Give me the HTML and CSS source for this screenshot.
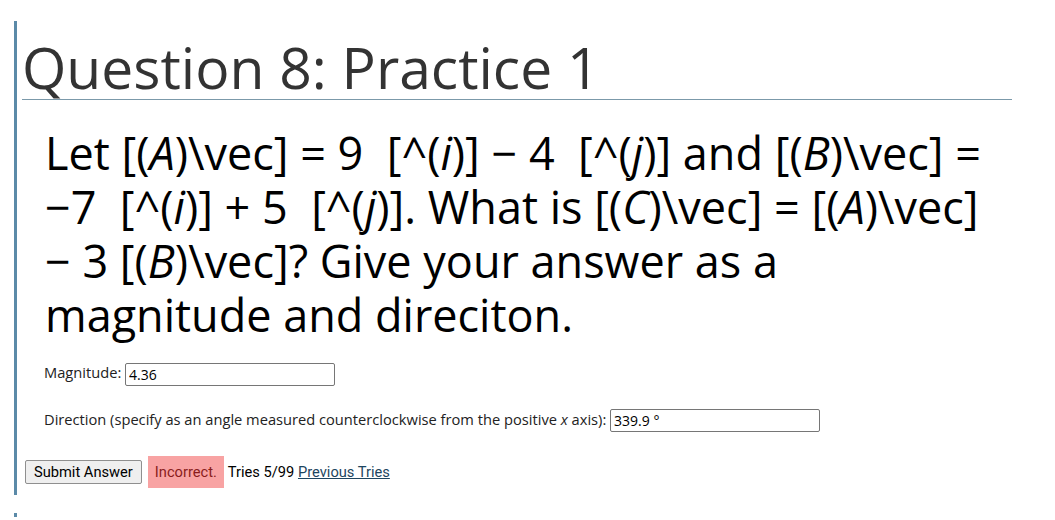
FILE: index.html
```html
<!DOCTYPE html>
<html>
<head>
<meta charset="utf-8">
<link rel="stylesheet" href="styles.css">
</head>
<body>
<div class="question">
  <h2 class="qtitle">Question 8: Practice 1</h2>
  <p class="prompt">Let [(<i>A</i>)\vec] = 9&nbsp; [^(<i>i</i>)] − 4&nbsp; [^(<i>j</i>)] and [(<i>B</i>)\vec] = −7&nbsp; [^(<i>i</i>)] + 5&nbsp; [^(<i>j</i>)]. What is [(<i>C</i>)\vec] = [(<i>A</i>)\vec] −&nbsp;3 [(<i>B</i>)\vec]? Give your answer as a magnitude and direciton.</p>
  <div class="field field-mag">
    <label>Magnitude: <input class="answer" type="text" value="4.36"></label>
  </div>
  <div class="field field-dir">
    <label>Direction (specify as an angle measured counterclockwise from the positive <i>x</i> axis): <input class="answer" type="text" value="339.9 °"></label>
  </div>
  <div class="actions">
    <button class="submit" type="button">Submit Answer</button>
    <span class="status">Incorrect.</span>
    <span class="tries">Tries 5/99 <a href="#" class="prev">Previous Tries</a></span>
  </div>
</div>
<div class="question next"></div>
</body>
</html>
```
FILE: styles.css
```css
html, body {
  margin: 0;
  padding: 0;
  background: #ffffff;
}
body {
  font-family: "Open Sans", "Noto Sans", sans-serif;
  color: #000;
  overflow: hidden;
  height: 520px;
}
.question {
  margin: 21px 43px 0 14px;
  border-left: 3px solid #5b8aa8;
  padding: 14px 0 7px 5px;
}
.qtitle {
  margin: 0;
  font-family: "Open Sans", sans-serif;
  font-weight: 400;
  font-size: 57px;
  line-height: 64px;
  color: #333333;
  border-bottom: 1px solid #7b99aa;
}
.prompt {
  margin: 26px 25px 0 23px;
  font-size: 45px;
  line-height: 54px;
  color: #000;
}
.field {
  margin-left: 22px;
  font-size: 14.67px;
  line-height: 23px;
  color: #222;
}
.field-mag {
  margin-top: 19px;
}
.field-dir {
  margin-top: 22px;
}
.answer {
  box-sizing: border-box;
  width: 210px;
  height: 23px;
  margin: 0;
  padding: 0 3px;
  border: 1px solid #767676;
  border-radius: 2px;
  font-family: "Open Sans", sans-serif;
  font-size: 14px;
  color: #000;
  vertical-align: middle;
}
.actions {
  margin-top: 24px;
  margin-left: 3px;
  display: flex;
  align-items: center;
  font-family: Roboto, sans-serif;
  font-size: 14.67px;
}
.submit {
  font-family: Roboto, sans-serif;
  font-size: 14.67px;
  height: 24px;
  padding: 0 8px;
  border: 1px solid #8f8f8f;
  border-radius: 2px;
  background: #efefef;
  color: #000;
}
.status {
  margin-left: 6px;
  background: #f8a3a3;
  color: #8a1c1c;
  padding: 0 7px;
  line-height: 32px;
}
.tries {
  margin-left: 4px;
  color: #000;
}
.prev {
  color: #1d4560;
  text-decoration: underline;
}
.next {
  margin-top: 18px;
  height: 4px;
  padding: 0;
}
```
